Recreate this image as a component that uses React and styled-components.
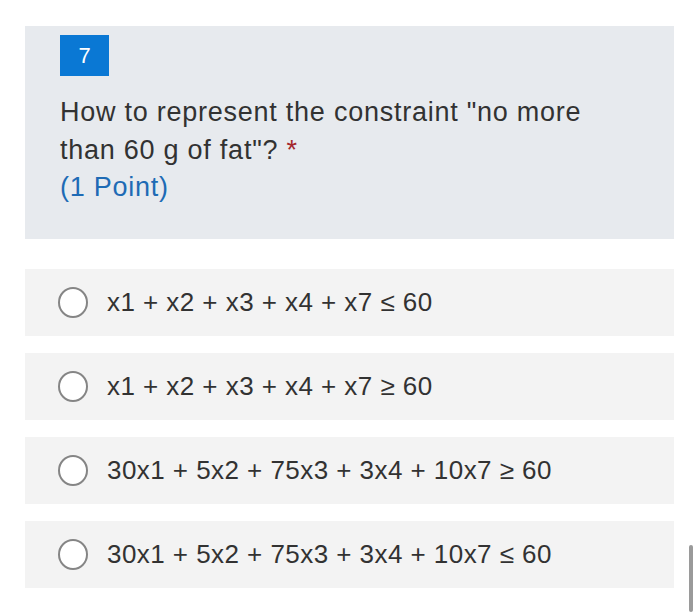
import React from "react";
import styled, { createGlobalStyle } from "styled-components";

const GlobalStyle = createGlobalStyle`
  body {
    margin: 0;
    background: #ffffff;
    font-family: "Liberation Sans", Arial, sans-serif;
    color: #333333;
  }
`;

const options = [
  "x1 + x2 + x3 + x4 + x7 ≤ 60",
  "x1 + x2 + x3 + x4 + x7 ≥ 60",
  "30x1 + 5x2 + 75x3 + 3x4 + 10x7 ≥ 60",
  "30x1 + 5x2 + 75x3 + 3x4 + 10x7 ≤ 60",
];

const App = () => {
  return (
    <Page>
      <GlobalStyle />
      <Header>
        <Badge>7</Badge>
        <Question>
          How to represent the constraint "no more than 60 g of fat"?{" "}
          <Required>*</Required>
        </Question>
        <Points>(1 Point)</Points>
      </Header>

      <OptionList>
        {options.map((o) => (
          <Option key={o}>
            <Radio />
            <OptionText>{o}</OptionText>
          </Option>
        ))}
      </OptionList>

      <Scrollbar />
    </Page>
  );
};

const Page = styled.div`
  padding: 26px 26px 20px 25px;
  width: 700px;
  box-sizing: border-box;
`;

const Header = styled.section`
  background: #e7eaee;
  padding: 9px 30px 32px 35px;
`;

const Badge = styled.div`
  width: 49px;
  height: 41px;
  background: #0a78d4;
  color: #ffffff;
  font-size: 22px;
  display: flex;
  align-items: center;
  justify-content: center;
`;

const Question = styled.div`
  margin-top: 18px;
  font-size: 27px;
  line-height: 37.5px;
  color: #323232;
  letter-spacing: 0.75px;
  max-width: 560px;
`;

const Required = styled.span`
  color: #a4262c;
`;

const Points = styled.div`
  font-size: 27px;
  line-height: 37.5px;
  letter-spacing: 0.75px;
  color: #1e6bb5;
`;

const OptionList = styled.div`
  margin-top: 30px;
  display: flex;
  flex-direction: column;
  gap: 17px;
`;

const Option = styled.div`
  height: 67px;
  background: #f3f3f3;
  display: flex;
  align-items: center;
  padding-left: 33px;
  gap: 19px;
`;

const Radio = styled.span`
  width: 26px;
  height: 27px;
  border: 2px solid #858585;
  border-radius: 50%;
  background: #ffffff;
  flex-shrink: 0;
`;

const OptionText = styled.span`
  font-size: 26px;
  color: #323232;
  letter-spacing: 0.45px;
`;

const Scrollbar = styled.div`
  position: fixed;
  left: 689px;
  top: 545px;
  width: 4px;
  height: 67px;
  border-radius: 2px;
  background: #9a9a9a;
`;

export default App;
